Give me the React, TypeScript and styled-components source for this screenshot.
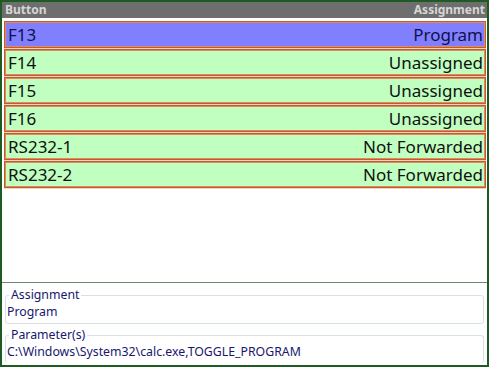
import React from "react";
import styled, { createGlobalStyle } from "styled-components";

const Global = createGlobalStyle`
  html, body { margin: 0; padding: 0; background: #ffffff; }
  * { box-sizing: border-box; }
`;

const Frame = styled.div`
  width: 489px;
  height: 367px;
  border: 2px solid #1e5b22;
  display: flex;
  flex-direction: column;
  background: #ffffff;
  font-family: "Noto Sans", "Open Sans", sans-serif;
  overflow: hidden;
`;

const Header = styled.div`
  flex-shrink: 0;
  height: 16px;
  background: #6e6e6e;
  color: #d6d6d6;
  font-size: 12px;
  font-weight: 700;
  line-height: 16px;
  display: flex;
  justify-content: space-between;
  padding: 0 2px 0 3px;
`;

const List = styled.div`
  flex-shrink: 0;
  height: 265px;
  display: flex;
  flex-direction: column;
  gap: 1px;
  padding: 3px 1px 0 2px;
  border-bottom: 1px solid #6f8a6f;
`;

const Row = styled.div<{ $selected?: boolean }>`
  flex-shrink: 0;
  height: 27px;
  border: 1px solid #c25a34;
  box-shadow: inset 0 0 0 1px #de8a5c, 0 1px 0 #f1d6b8;
  background: ${(p) => (p.$selected ? "#8080ff" : "#c0ffc0")};
  color: ${(p) => (p.$selected ? "#10104a" : "#101010")};
  display: flex;
  align-items: center;
  justify-content: space-between;
  padding: 0 2px 1px 3px;
  font-size: 17px;
  line-height: 1;
`;

const Details = styled.div`
  flex: 1;
  min-height: 0;
  overflow: hidden;
  padding: 5px 3px 0 3px;
  display: flex;
  flex-direction: column;
`;

const Group = styled.div<{ $open?: boolean }>`
  position: relative;
  flex-shrink: 0;
  border: 1px solid #d8e0e4;
  border-bottom: ${(p) => (p.$open ? "none" : "1px solid #d8e0e4")};
  border-radius: 3px;
  margin-top: ${(p) => (p.$open ? "11px" : "7px")};
  padding: 9px 2px 4px 1px;
  color: #17176e;
  font-size: 12.3px;
  line-height: 14px;
`;

const Legend = styled.span`
  position: absolute;
  top: -8px;
  left: 3px;
  padding: 0 2px;
  background: #ffffff;
  color: #17176e;
  font-size: 12.3px;
  line-height: 14px;
`;

const rows = [
  { key: "F13", value: "Program", selected: true },
  { key: "F14", value: "Unassigned" },
  { key: "F15", value: "Unassigned" },
  { key: "F16", value: "Unassigned" },
  { key: "RS232-1", value: "Not Forwarded" },
  { key: "RS232-2", value: "Not Forwarded" },
];

export default function App() {
  return (
    <>
      <Global />
      <Frame>
        <Header>
          <span>Button</span>
          <span>Assignment</span>
        </Header>
        <List>
          {rows.map((r) => (
            <Row key={r.key} $selected={r.selected}>
              <span>{r.key}</span>
              <span>{r.value}</span>
            </Row>
          ))}
        </List>
        <Details>
          <Group>
            <Legend>Assignment</Legend>
            Program
          </Group>
          <Group $open>
            <Legend>Parameter(s)</Legend>
            C:\Windows\System32\calc.exe,TOGGLE_PROGRAM
          </Group>
        </Details>
      </Frame>
    </>
  );
}
